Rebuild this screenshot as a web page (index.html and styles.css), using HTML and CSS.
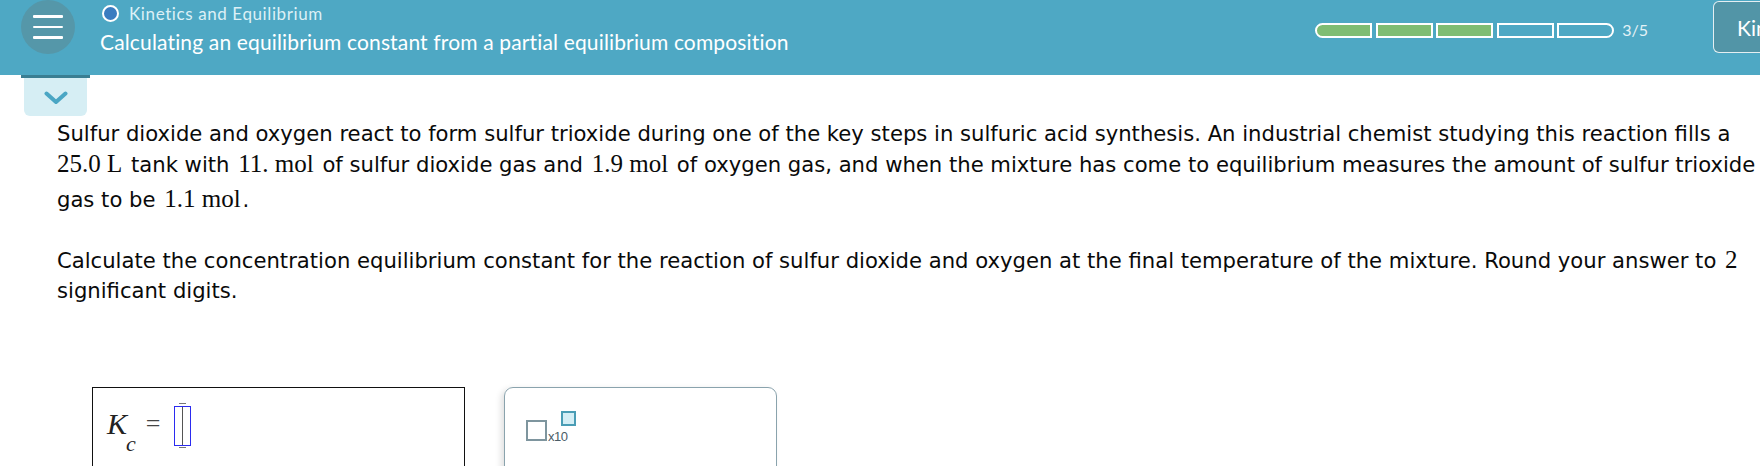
FILE: index.html
```html
<!DOCTYPE html>
<html lang="en">
<head>
<meta charset="utf-8">
<title>Kinetics and Equilibrium</title>
<link rel="stylesheet" href="styles.css">
</head>
<body>
<header class="topbar">
  <button class="menu-btn" aria-label="Menu"><span></span><span></span><span></span></button>
  <div class="titles">
    <div class="topic"><span class="topic-dot"></span><span class="topic-name">Kinetics and Equilibrium</span></div>
    <div class="lesson">Calculating an equilibrium constant from a partial equilibrium composition</div>
  </div>
  <div class="progress">
    <span class="seg done"></span>
    <span class="seg done"></span>
    <span class="seg done"></span>
    <span class="seg"></span>
    <span class="seg"></span>
  </div>
  <span class="count">3/5</span>
  <button class="topic-btn">Kinetics</button>
</header>

<div class="tab">
  <div class="tab-inner">
    <svg class="chev" width="24" height="14" viewBox="0 0 24 14"><path d="M2.5 2.5 L12 11 L21.5 2.5" fill="none" stroke="#4aa6c4" stroke-width="4" stroke-linecap="round" stroke-linejoin="round"/></svg>
  </div>
</div>

<main class="content">
  <p class="para para-first">
    <span class="line">Sulfur dioxide and oxygen react to form sulfur trioxide during one of the key steps in sulfuric acid synthesis. An industrial chemist studying this reaction fills a</span>
    <span class="line"><span class="m m-start">25.0 L</span> tank with <span class="m">11. mol</span> of sulfur dioxide gas and <span class="m">1.9 mol</span> of oxygen gas, and when the mixture has come to equilibrium measures the amount of sulfur trioxide</span>
    <span class="line line-last">gas to be <span class="m">1.1 mol</span>.</span>
  </p>
  <p class="para para-second">
    <span class="line">Calculate the concentration equilibrium constant for the reaction of sulfur dioxide and oxygen at the final temperature of the mixture. Round your answer to <span class="m">2</span></span>
    <span class="line">significant digits.</span>
  </p>

  <div class="answer">
    <div class="eq-box">
      <span class="k">K</span><span class="sub">c</span><span class="eq">=</span>
      <span class="cursor"><span class="cap top"></span><span class="bar"></span><span class="cap bottom"></span></span>
    </div>
    <div class="tools">
      <div class="sci">
        <span class="box-main"></span><span class="x10">x10</span><span class="box-exp"></span>
      </div>
    </div>
  </div>
</main>
</body>
</html>
```

FILE: styles.css
```css
html, body {
  margin: 0;
  padding: 0;
  background: #ffffff;
}
body {
  width: 1760px;
  height: 466px;
  overflow: hidden;
  font-family: "DejaVu Sans", Verdana, sans-serif;
}

/* ---------- header ---------- */
.topbar {
  display: flex;
  align-items: flex-start;
  height: 75px;
  background: #4ea8c4;
  padding-left: 21px;
  box-sizing: border-box;
  font-family: Lato, "Open Sans", sans-serif;
}
.menu-btn {
  width: 54px;
  height: 54px;
  border-radius: 50%;
  border: 0;
  padding: 0;
  background: #5597a9;
  display: flex;
  flex-direction: column;
  align-items: center;
  justify-content: center;
  gap: 8px;
  flex: none;
}
.menu-btn span {
  display: block;
  width: 30px;
  height: 2.5px;
  background: #ffffff;
  border-radius: 1px;
}
.titles {
  margin-left: 25px;
  padding-top: 3px;
}
.topic {
  display: flex;
  align-items: center;
  height: 20px;
  font-size: 17px;
  letter-spacing: 0.6px;
  color: #dcf0f6;
}
.topic-dot {
  width: 13px;
  height: 13px;
  border-radius: 50%;
  background: #3a7cc0;
  border: 2px solid #ffffff;
  margin-left: 2px;
  margin-right: 10px;
}
.lesson {
  margin-top: 7px;
  font-size: 21px;
  letter-spacing: 0.15px;
  line-height: 24px;
  color: #ffffff;
}
.progress {
  display: flex;
  gap: 3.5px;
  margin-left: auto;
  margin-top: 23px;
}
.seg {
  width: 57px;
  height: 15px;
  box-sizing: border-box;
  border: 2px solid #ffffff;
}
.seg.done {
  background: #7fbd73;
}
.seg:first-child {
  border-radius: 8px 0 0 8px;
}
.seg:last-child {
  border-radius: 0 8px 8px 0;
}
.count {
  margin-left: 8px;
  margin-top: 20px;
  font-size: 16px;
  line-height: 20px;
  color: #e4f2f6;
}
.topic-btn {
  flex: none;
  width: 167px;
  height: 52px;
  margin-top: 1px;
  margin-left: 65px;
  margin-right: -120px;
  padding: 0 0 0 23px;
  text-align: left;
  border: 1px solid rgba(255, 255, 255, 0.85);
  border-radius: 6px;
  background: #5295a7;
  color: #ffffff;
  font-family: Lato, "Open Sans", sans-serif;
  font-size: 21px;
}

/* ---------- tab under header ---------- */
.tab {
  margin-left: 21px;
  width: 69px;
  border-top: 3px solid #3a7e92;
}
.tab-inner {
  margin: 0 3px;
  height: 38px;
  background: #d6eef4;
  border-radius: 0 0 6px 6px;
  display: flex;
  justify-content: center;
  align-items: center;
}
.chev {
  display: block;
  margin-top: 2px;
}

/* ---------- question text ---------- */
.content {
  padding-left: 57px;
}
.para {
  margin: 0;
  font-size: 21.15px;
  color: #0a0a0a;
}
.line {
  display: block;
  white-space: nowrap;
}
.para-first {
  margin-top: 2px;
  line-height: 31px;
}
.line-last {
  margin-top: 4px;
}
.para-second {
  margin-top: 30.5px;
  line-height: 30px;
}
.m {
  font-family: "Liberation Serif", "Times New Roman", serif;
  font-size: 25px;
  line-height: 1;
  margin: 0 2px;
}
.m-start {
  margin-left: 0;
}

/* ---------- answer area ---------- */
.answer {
  display: flex;
  align-items: flex-start;
  margin-top: 81px;
  margin-left: 35px;
}
.eq-box {
  width: 373px;
  height: 120px;
  box-sizing: border-box;
  border: 1px solid #111111;
  padding: 0 0 0 14px;
  display: flex;
  align-items: flex-start;
  font-family: "Liberation Serif", "Times New Roman", serif;
  color: #222222;
}
.k {
  font-style: italic;
  font-size: 30px;
  line-height: 34px;
  margin-top: 19px;
}
.sub {
  font-style: italic;
  font-size: 22px;
  line-height: 22px;
  margin-top: 45px;
  margin-left: -1px;
}
.eq {
  font-size: 26px;
  line-height: 30px;
  margin-top: 21px;
  margin-left: 10px;
  color: #444444;
}
.cursor {
  position: relative;
  width: 17px;
  height: 40px;
  margin-left: 14px;
  margin-top: 18px;
  box-sizing: border-box;
  border: 1.5px solid #2b2bf0;
}
.cursor .bar {
  position: absolute;
  left: 6.5px;
  top: 0;
  bottom: 0;
  width: 1.5px;
  background: #555555;
}
.cursor .cap {
  position: absolute;
  left: 3.5px;
  width: 7px;
  height: 2px;
  border-top: 1px solid #777777;
}
.cursor .cap.top {
  top: -4px;
}
.cursor .cap.bottom {
  bottom: -5px;
}
.tools {
  margin-left: 39px;
  width: 273px;
  height: 120px;
  box-sizing: border-box;
  border: 1px solid #8aa3ad;
  border-radius: 9px;
  box-shadow: -3px 2px 6px rgba(0, 0, 0, 0.12);
  padding: 23px 0 0 21px;
}
.sci {
  display: flex;
  align-items: flex-start;
}
.box-main {
  width: 21px;
  height: 21px;
  box-sizing: border-box;
  border: 2.5px solid #7e959e;
  margin-top: 9px;
}
.x10 {
  font-family: "Liberation Sans", Arial, sans-serif;
  font-size: 13px;
  color: #4a5c66;
  margin-top: 18px;
  margin-left: 1px;
  letter-spacing: -0.5px;
}
.box-exp {
  width: 15px;
  height: 15px;
  box-sizing: border-box;
  border: 2px solid #4a9db5;
  background: #d4eef5;
  margin-left: -6px;
}
```
